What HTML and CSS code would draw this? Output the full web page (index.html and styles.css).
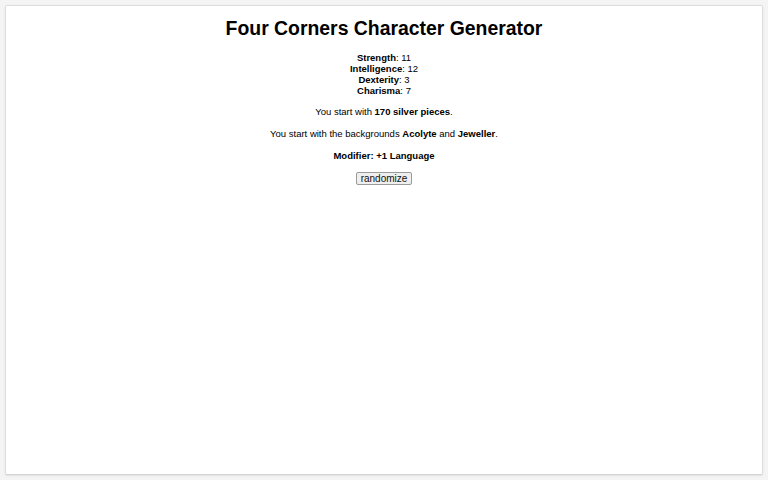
FILE: index.html
```html
<!DOCTYPE html>
<html lang="en">
<head>
    <meta charset="UTF-8">
    <meta name="viewport" content="width=device-width, initial-scale=1.0">
    <title>Four Corners Character Generator</title>
    <link rel="stylesheet" href="styles.css">
</head>
<body>

    <div class="sheet">
        <h1>Four Corners Character Generator</h1>

        <div class="stats">
            <div><b>Strength</b>: <span id="str">11</span></div>
            <div><b>Intelligence</b>: <span id="int">12</span></div>
            <div><b>Dexterity</b>: <span id="dex">3</span></div>
            <div><b>Charisma</b>: <span id="cha">7</span></div>
        </div>

        <p>You start with <b id="silver">170 silver pieces</b>.</p>
        <p>You start with the backgrounds <b id="bg1">Acolyte</b> and <b id="bg2">Jeweller</b>.</p>
        <p class="modifier"><b>Modifier: <span id="mod">+1 Language</span></b></p>

        <button class="randomize" onclick="randomize()">randomize</button>
    </div>

    <script>
        const backgrounds = ['Acolyte', 'Jeweller', 'Sailor', 'Soldier', 'Farmer', 'Thief', 'Scribe', 'Hunter'];
        const modifiers = ['+1 Language', '+1 Weapon Skill', '+2 Hit Points', '+1 Saving Throw'];

        function roll3d6() {
            let total = 0;
            for (let i = 0; i < 3; i++) {
                total += Math.floor(Math.random() * 6) + 1;
            }
            return total;
        }

        function pick(list) {
            return list[Math.floor(Math.random() * list.length)];
        }

        function randomize() {
            document.getElementById('str').textContent = roll3d6();
            document.getElementById('int').textContent = roll3d6();
            document.getElementById('dex').textContent = roll3d6();
            document.getElementById('cha').textContent = roll3d6();
            document.getElementById('silver').textContent = (roll3d6() * 10) + ' silver pieces';

            const first = pick(backgrounds);
            let second = pick(backgrounds);
            while (second === first) {
                second = pick(backgrounds);
            }
            document.getElementById('bg1').textContent = first;
            document.getElementById('bg2').textContent = second;
            document.getElementById('mod').textContent = pick(modifiers);
        }
    </script>

</body>
</html>
```

FILE: styles.css
```css
body {
    margin: 0;
    padding: 5px;
    height: 100vh;
    box-sizing: border-box;
    font-family: 'Liberation Sans', Arial, sans-serif;
    font-size: 9.5px;
    line-height: 11px;
    background-color: #f4f4f4;
}

.sheet {
    height: 100%;
    box-sizing: border-box;
    background-color: #fff;
    border: 1px solid #ddd;
    border-bottom-color: #d4d4d4;
    border-radius: 2px;
    box-shadow: 0 1px 2px rgba(0, 0, 0, 0.08);
    text-align: center;
    padding: 1px 10px;
}

h1 {
    font-size: 19.4px;
    line-height: 22px;
    margin: 10px 0 13px;
}

p {
    margin: 11px 0;
}

.stats + p {
    margin-top: 10px;
}

.randomize {
    font-family: 'Liberation Sans', Arial, sans-serif;
    font-size: 10px;
    line-height: 11px;
    padding: 0 4px;
    border: 1px solid #9a9a9a;
    border-radius: 2px;
    background-color: #efefef;
    color: #111;
}
```
